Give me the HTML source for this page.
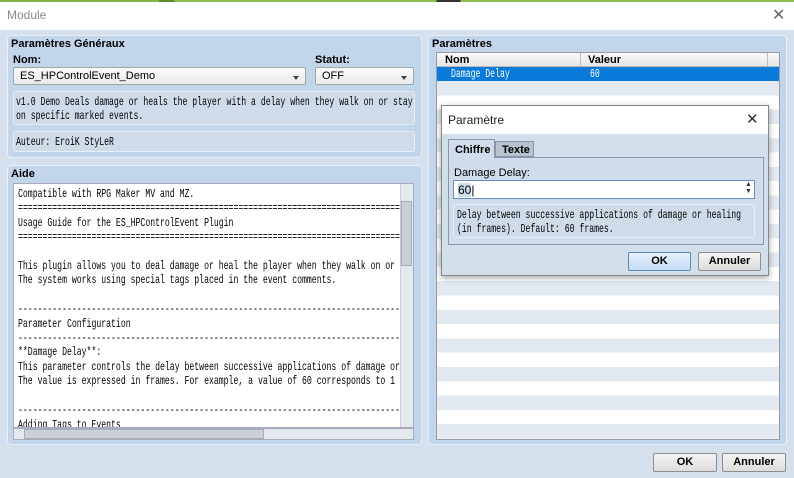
<!DOCTYPE html>
<html><head><meta charset="utf-8"><style>
*{box-sizing:border-box;margin:0;padding:0}
body{width:794px;height:478px;overflow:hidden;background:#d5e0ec;font-family:"Liberation Sans",sans-serif;font-size:11px;color:#000;position:relative}
.a{position:absolute}
.mono{font-family:"Liberation Mono",monospace;font-size:12px;white-space:pre}
.sq{display:block;transform:scaleX(0.68);transform-origin:0 0;width:150%}
.grp{background:#c3d5ea;border:1px solid #e6eef8;border-radius:4px}
.hd{font-weight:bold;font-size:11px}
.box{background:#cfdbe8;border:1px solid #e8eef5;border-radius:3px;overflow:hidden}
.combo{background:linear-gradient(#fbfbfb,#e9e9e9);border:1px solid #9aa;border-radius:2px;padding:2px 6px;font-size:11px}
.combo:after{content:"";position:absolute;right:6px;top:8px;border:3px solid transparent;border-top:4px solid #444}
.btn{background:linear-gradient(#f5f5f5,#dcdcdc);border:1px solid #8d8d8d;border-radius:2px;text-align:center;font-weight:bold;font-size:11px;line-height:17px}
</style></head><body>
<div class="a" style="left:0;top:0;width:794px;height:30px;background:#fff"></div>
<div class="a" style="left:0;top:0;width:794px;height:2px;background:linear-gradient(90deg,#7fb640 0 20%,#5a8a30 20% 22%,#8cc04c 22% 55%,#333 55% 58%,#8cc04c 58% 100%)"></div>
<div class="a" style="left:7px;top:8px;font-size:12px;color:#888">Module</div>
<div class="a" style="left:772px;top:5px;font-size:16px;color:#666">✕</div>

<div class="a grp" style="left:7px;top:35px;width:415px;height:123px"></div>
<div class="a hd" style="left:11px;top:38px">Paramètres Généraux</div>
<div class="a" style="left:13px;top:54px;font-weight:bold">Nom:</div>
<div class="a" style="left:315px;top:54px;font-weight:bold">Statut:</div>
<div class="a combo" style="left:13px;top:67px;width:293px;height:18px">ES_HPControlEvent_Demo</div>
<div class="a combo" style="left:315px;top:67px;width:99px;height:18px">OFF</div>
<div class="a box mono" style="left:13px;top:91px;width:402px;height:34px;padding:3px 2px;line-height:14px"><span class="sq">v1.0 Demo Deals damage or heals the player with a delay when they walk on or stay
on specific marked events.</span></div>
<div class="a box mono" style="left:13px;top:131px;width:402px;height:21px;padding:3px 2px;line-height:14px"><span class="sq">Auteur: EroiK StyLeR</span></div>

<div class="a grp" style="left:7px;top:165px;width:415px;height:280px"></div>
<div class="a hd" style="left:11px;top:168px">Aide</div>
<div class="a" style="left:13px;top:183px;width:401px;height:245px;background:#fff;border:1px solid #aab;overflow:hidden">
<div class="mono" style="padding:3px 0 0 4px;line-height:14.4px"><span class="sq">Compatible with RPG Maker MV and MZ.
================================================================================
Usage Guide for the ES_HPControlEvent Plugin
================================================================================

This plugin allows you to deal damage or heal the player when they walk on or stay
The system works using special tags placed in the event comments.

--------------------------------------------------------------------------------
Parameter Configuration
--------------------------------------------------------------------------------
**Damage Delay**:
This parameter controls the delay between successive applications of damage or heal
The value is expressed in frames. For example, a value of 60 corresponds to 1 second

--------------------------------------------------------------------------------
Adding Tags to Events</span></div>
<div class="a" style="right:0;top:0;width:13px;height:245px;background:#e4e9ef;border-left:1px solid #ccd"></div>
<div class="a" style="right:1px;top:17px;width:11px;height:65px;background:#c9d0d8;border:1px solid #aab"></div>
</div>
<div class="a" style="left:13px;top:428px;width:401px;height:12px;background:#e4e9ef;border:1px solid #aab"></div>
<div class="a" style="left:24px;top:429px;width:240px;height:10px;background:#c9d0d8;border:1px solid #aab"></div>

<div class="a grp" style="left:428px;top:35px;width:359px;height:410px"></div>
<div class="a hd" style="left:432px;top:38px">Paramètres</div>
<div class="a" style="left:436px;top:52px;width:344px;height:388px;border:1px solid #99a;background:repeating-linear-gradient(#e2e9f1 0 14.3px,#fff 14.3px 28.6px);background-position:0 28px"></div>
<div class="a" style="left:437px;top:53px;width:342px;height:14px;background:linear-gradient(#fafafa,#e6e6e6);border-bottom:1px solid #bbb"></div>
<div class="a" style="left:437px;top:54px;font-weight:bold;padding-left:8px">Nom</div>
<div class="a" style="left:580px;top:53px;width:1px;height:14px;background:#bbb"></div>
<div class="a" style="left:767px;top:53px;width:1px;height:14px;background:#bbb"></div>
<div class="a" style="left:588px;top:54px;font-weight:bold">Valeur</div>
<div class="a" style="left:437px;top:67px;width:342px;height:14px;background:#0a7ad8"></div>
<div class="a mono" style="left:451px;top:67px;color:#fff"><span class="sq">Damage Delay</span></div>
<div class="a mono" style="left:590px;top:67px;color:#fff"><span class="sq">60</span></div>

<div class="a" style="left:441px;top:105px;width:328px;height:171px;background:#d2deea;border:1px solid #888;box-shadow:0 2px 6px rgba(0,0,0,.35)"></div>
<div class="a" style="left:442px;top:106px;width:326px;height:28px;background:#fff"></div>
<div class="a" style="left:448px;top:113px;font-size:12px;color:#222">Paramètre</div>
<div class="a" style="left:746px;top:110px;font-size:15px;color:#333">✕</div>
<div class="a" style="left:448px;top:157px;width:316px;height:88px;background:#d0dceb;border:1px solid #8a96a8"></div>
<div class="a" style="left:448px;top:139px;width:47px;height:19px;background:#d0dceb;border:1px solid #8a96a8;border-bottom:none;font-weight:bold;padding:4px 0 0 6px">Chiffre</div>
<div class="a" style="left:495px;top:141px;width:39px;height:16px;background:#b8c3cf;border:1px solid #8a96a8;font-weight:bold;padding:2px 0 0 6px">Texte</div>
<div class="a" style="left:454px;top:167px">Damage Delay:</div>
<div class="a" style="left:453px;top:180px;width:302px;height:19px;background:#fff;border:1px solid #6a8fc0;font-size:12px;padding:2px 0 0 4px"><span style="background:#cde">60</span>|</div>
<div class="a" style="left:745px;top:181px;font-size:7px;line-height:7px;color:#333">▲<br>▼</div>
<div class="a box mono" style="left:453px;top:204px;width:302px;height:34px;padding:3px 3px;line-height:14px"><span class="sq">Delay between successive applications of damage or healing
(in frames). Default: 60 frames.</span></div>
<div class="a btn" style="left:628px;top:252px;width:63px;height:19px;background:linear-gradient(#e6f1fb,#c3dbf3);border-color:#5a8ac0">OK</div>
<div class="a btn" style="left:698px;top:252px;width:63px;height:19px">Annuler</div>

<div class="a btn" style="left:653px;top:453px;width:64px;height:19px">OK</div>
<div class="a btn" style="left:722px;top:453px;width:64px;height:19px">Annuler</div>
</body></html>
